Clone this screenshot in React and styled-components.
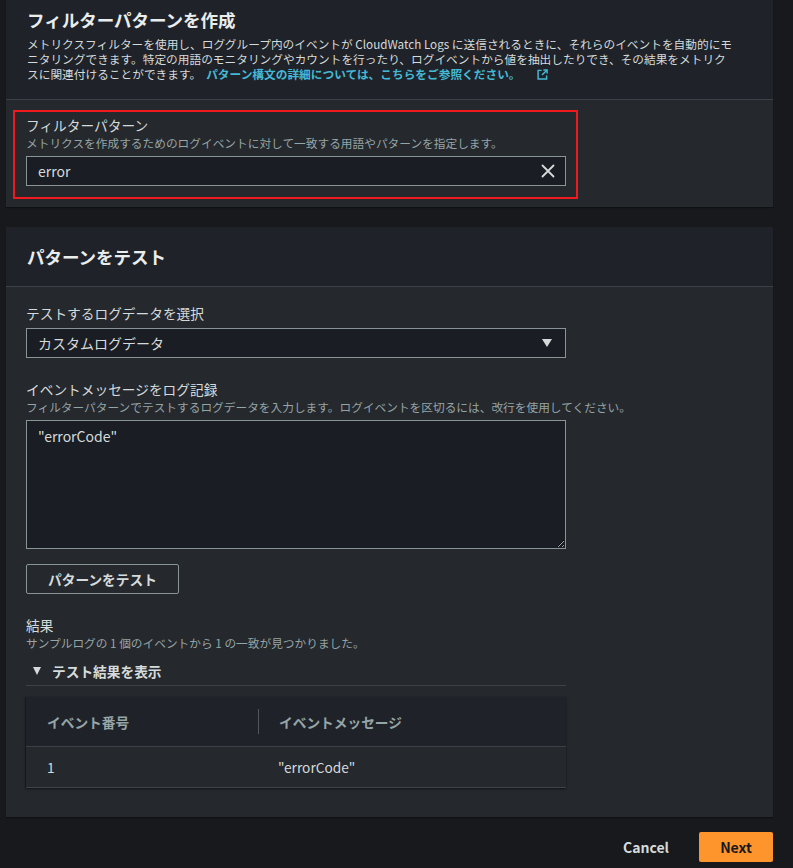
import React from "react";
import styled, { createGlobalStyle } from "styled-components";

const C = {
  page: "#18191d",
  head: "#1f2228",
  body: "#25282d",
  field: "#1a1d23",
  border: "#879596",
  line: "#3c4047",
  text: "#d5dbdb",
  title: "#eaeded",
  sub: "#95a5a6",
  link: "#44b9d6",
  orange: "#fe942c",
};

const FONT = `"Noto Sans CJK JP", "Noto Sans", sans-serif`;

const Global = createGlobalStyle`
  html, body { margin: 0; padding: 0; background: ${C.page}; }
  body { font-family: ${FONT}; color: ${C.text}; }
  *, *::before, *::after { box-sizing: border-box; }
`;

const Page = styled.div`
  width: 793px;
  min-height: 868px;
  padding: 0 20px 0 6px;
  display: flex;
  flex-direction: column;
`;

const Panel = styled.section`
  background: ${C.body};
  display: flex;
  flex-direction: column;
  margin-top: ${(p) => p.$mt || 0}px;
  box-shadow: 0 1px 1px rgba(0, 0, 0, 0.35);
`;

const PanelHeader = styled.header`
  background: ${C.head};
  border-bottom: 1px solid ${C.line};
  padding: ${(p) => p.$pad};
`;

const PanelBody = styled.div`
  padding: ${(p) => p.$pad};
  display: flex;
  flex-direction: column;
`;

const Title = styled.h2`
  margin: 0;
  font-size: 17.5px;
  line-height: 26px;
  font-weight: 700;
  color: ${C.title};
`;

const Intro = styled.div`
  margin-top: 3px;
  display: flex;
  flex-direction: column;
`;

const IntroLine = styled.div`
  height: 15px;
  font-size: 11.7px;
  line-height: 15px;
  color: ${C.text};
  white-space: nowrap;
`;

const Link = styled.a`
  color: ${C.link};
  font-weight: 700;
  text-decoration: none;
  margin-left: 5px;
`;

const ExtIcon = styled.svg`
  width: 11px;
  height: 11px;
  margin-left: 16px;
  vertical-align: -1px;
`;

const Highlight = styled.div`
  border: 2px solid #f01a1e;
  padding: 3px 10px 11px 11px;
  display: flex;
  flex-direction: column;
`;

const Label = styled.div`
  font-size: 13.7px;
  line-height: 20px;
  color: ${C.text};
  margin-top: ${(p) => p.$mt || 0}px;
`;

const Hint = styled.div`
  font-size: 11.7px;
  line-height: 16px;
  color: ${C.sub};
  white-space: nowrap;
`;

const InputBox = styled.div`
  margin-top: 5px;
  height: 30px;
  background: ${C.field};
  border: 1px solid ${C.border};
  display: flex;
  align-items: center;
  justify-content: space-between;
  padding: 0 10px 0 11px;
  font-size: 14px;
  color: ${C.text};
`;

const SelectBox = styled(InputBox)`
  padding: 0 13px 0 11px;
`;

const Caret = styled.span`
  width: 0;
  height: 0;
  border-left: 5px solid transparent;
  border-right: 5px solid transparent;
  border-top: 8px solid ${C.text};
`;

const TextArea = styled.textarea`
  display: block;
  margin-top: 5px;
  height: 129px;
  width: 100%;
  background: ${C.field};
  border: 1px solid ${C.border};
  border-radius: 0;
  color: ${C.text};
  font-family: ${FONT};
  font-size: 14px;
  line-height: 20px;
  padding: 5px 11px;
  resize: vertical;
  outline: none;
  color-scheme: dark;
`;

const GhostButton = styled.button`
  margin-top: 15px;
  align-self: flex-start;
  height: 30px;
  padding: 0 21px;
  background: transparent;
  border: 1px solid ${C.border};
  border-radius: 2px;
  color: ${C.text};
  font-family: ${FONT};
  font-size: 13.7px;
  font-weight: 700;
`;

const ExpandHeader = styled.div`
  margin-top: 10px;
  padding: 0 0 4px 7px;
  border-bottom: 1px solid ${C.line};
  display: flex;
  align-items: center;
  gap: 11px;
  font-size: 13.7px;
  line-height: 20px;
  font-weight: 700;
  color: ${C.text};
`;

const SmallCaret = styled.span`
  width: 0;
  height: 0;
  border-left: 4.5px solid transparent;
  border-right: 4.5px solid transparent;
  border-top: 8px solid ${C.text};
`;

const Table = styled.div`
  margin-top: 11px;
  display: flex;
  flex-direction: column;
  box-shadow: 0 1px 2px rgba(0, 0, 0, 0.5), -1px 0 1px rgba(0, 0, 0, 0.25);
  border-bottom: 1px solid #3f434a;
`;

const Row = styled.div`
  display: grid;
  grid-template-columns: 232px 1fr;
  align-items: center;
  height: ${(p) => (p.$head ? 50 : 40)}px;
  background: ${(p) => (p.$head ? C.head : C.body)};
  border-bottom: ${(p) => (p.$head ? `1px solid ${C.line}` : "none")};
`;

const Cell = styled.div`
  padding-left: ${(p) => (p.$first ? 21 : 20)}px;
  font-size: 13.7px;
  line-height: 20px;
  font-weight: ${(p) => (p.$head ? 700 : 400)};
  color: ${(p) => (p.$head ? C.sub : C.text)};
  border-left: ${(p) => (p.$divider ? `1px solid #50575f` : "none")};
  padding-top: ${(p) => (p.$divider ? 3 : 0)}px;
  padding-bottom: ${(p) => (p.$divider ? 2 : 0)}px;
`;

const Footer = styled.footer`
  margin-top: 15px;
  display: flex;
  justify-content: flex-end;
  align-items: center;
  gap: 10px;
`;

const LinkButton = styled.button`
  height: 30px;
  padding: 0 20px;
  background: transparent;
  border: none;
  color: ${C.text};
  font-family: ${FONT};
  font-size: 14px;
  font-weight: 700;
`;

const PrimaryButton = styled.button`
  height: 30px;
  width: 74px;
  background: ${C.orange};
  border: none;
  border-radius: 2px;
  color: #16191f;
  font-family: ${FONT};
  font-size: 14px;
  font-weight: 700;
`;

const ClearIcon = () => (
  <svg width="14" height="14" viewBox="0 0 14 14">
    <path d="M1.5 1.5 L12.5 12.5 M12.5 1.5 L1.5 12.5" stroke={C.text} strokeWidth="1.8" strokeLinecap="round" />
  </svg>
);

export default function App() {
  return (
    <>
      <Global />
      <Page>
        <Panel>
          <PanelHeader $pad="7px 20px 18px 21px">
            <Title>フィルターパターンを作成</Title>
            <Intro>
              <IntroLine>
                メトリクスフィルターを使用し、ロググループ内のイベントが CloudWatch Logs に送信されるときに、それらのイベントを自動的にモ
              </IntroLine>
              <IntroLine>
                ニタリングできます。特定の用語のモニタリングやカウントを行ったり、ログイベントから値を抽出したりでき、その結果をメトリク
              </IntroLine>
              <IntroLine>
                スに関連付けることができます。
                <Link href="#">パターン構文の詳細については、こちらをご参照ください。</Link>
                <ExtIcon viewBox="0 0 12 12" fill="none" stroke={C.link} strokeWidth="1.6">
                  <path d="M5 1.5 H1.2 V10.8 H10.5 V7" />
                  <path d="M7 1 H11 V5" />
                  <path d="M11 1 L5.5 6.5" />
                </ExtIcon>
              </IntroLine>
            </Intro>
          </PanelHeader>
          <PanelBody $pad="10px 195px 8px 7px">
            <Highlight>
              <Label>フィルターパターン</Label>
              <Hint>メトリクスを作成するためのログイベントに対して一致する用語やパターンを指定します。</Hint>
              <InputBox>
                <span>error</span>
                <ClearIcon />
              </InputBox>
            </Highlight>
          </PanelBody>
        </Panel>

        <Panel $mt={20}>
          <PanelHeader $pad="17px 20px 16px 21px">
            <Title>パターンをテスト</Title>
          </PanelHeader>
          <PanelBody $pad="16px 207px 29px 20px">
            <Label>テストするログデータを選択</Label>
            <SelectBox>
              <span>カスタムログデータ</span>
              <Caret />
            </SelectBox>
            <Label $mt={21}>イベントメッセージをログ記録</Label>
            <Hint>フィルターパターンでテストするログデータを入力します。ログイベントを区切るには、改行を使用してください。</Hint>
            <TextArea defaultValue={'"errorCode"'} />
            <GhostButton>パターンをテスト</GhostButton>
            <Label $mt={21}>結果</Label>
            <Hint>サンプルログの 1 個のイベントから 1 の一致が見つかりました。</Hint>
            <ExpandHeader>
              <SmallCaret />
              <span>テスト結果を表示</span>
            </ExpandHeader>
            <Table>
              <Row $head>
                <Cell $head $first>イベント番号</Cell>
                <Cell $head $divider>イベントメッセージ</Cell>
              </Row>
              <Row>
                <Cell $first>1</Cell>
                <Cell>"errorCode"</Cell>
              </Row>
            </Table>
          </PanelBody>
        </Panel>

        <Footer>
          <LinkButton>Cancel</LinkButton>
          <PrimaryButton>Next</PrimaryButton>
        </Footer>
      </Page>
    </>
  );
}
